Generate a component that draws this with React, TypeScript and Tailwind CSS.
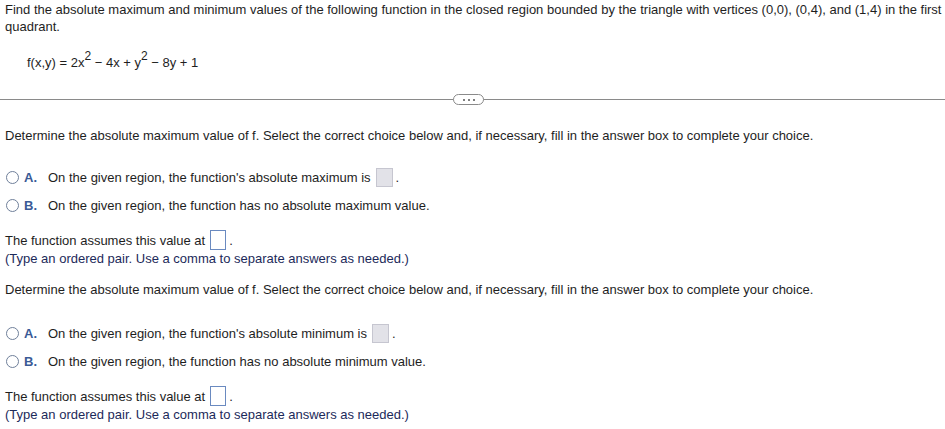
import React from "react";

function Radio({ letter, children }: { letter: string; children: React.ReactNode }) {
  return (
    <div className="flex items-center h-[20px]">
      <span className="ml-[6px] w-[13px] h-[13px] rounded-full border border-[#6f7f9a] bg-white shrink-0" />
      <span className="ml-[5px] w-[24px] font-bold text-[#3a5a96] text-[13px]">{letter}</span>
      <span className="flex items-center">{children}</span>
    </div>
  );
}

function GrayBox() {
  return <span className="inline-block w-[17px] h-[19px] bg-[#e2e2e8] border border-[#c6c6d0] ml-[5px] mr-[3px]" />;
}

function WhiteBox() {
  return <span className="inline-block w-[16px] h-[20px] bg-white border border-[#6a8ac0] ml-[5px] mr-[3px]" />;
}

export default function App() {
  return (
    <div
      className="w-[945px] h-[429px] bg-white text-[13px] leading-[17px] text-[#1e1e1e] overflow-hidden"
      style={{ fontFamily: '"Liberation Sans", Arial, sans-serif' }}
    >
      <div className="pl-[5px] pt-[1px] pr-[2px]">
        Find the absolute maximum and minimum values of the following function in the closed region bounded by the triangle with vertices (0,0), (0,4), and (1,4) in the first quadrant.
      </div>
      <div className="pl-[27px] mt-[19px] h-[17px] flex items-end">
        <span>
          f(x,y) = 2x<sup className="text-[12px] relative top-[-7px]">2</sup> − 4x + y<sup className="text-[12px] relative top-[-7px]">2</sup> − 8y + 1
        </span>
      </div>
      <div className="relative mt-[28px] h-[1px] bg-[#8a8a8a]">
        <div className="absolute left-[453px] top-[-5px] w-[31px] h-[11px] rounded-full border border-[#8a8a8a] bg-white flex items-center justify-center gap-[3px]">
          <span className="w-[2px] h-[2px] bg-[#555] rounded-full" />
          <span className="w-[2px] h-[2px] bg-[#555] rounded-full" />
          <span className="w-[2px] h-[2px] bg-[#555] rounded-full" />
        </div>
      </div>
      <div className="pl-[5px] mt-[27px]">
        Determine the absolute maximum value of f. Select the correct choice below and, if necessary, fill in the answer box to complete your choice.
      </div>
      <div className="mt-[23px] flex flex-col gap-[8px]">
        <Radio letter="A.">
          On the given region, the function's absolute maximum is<GrayBox />.
        </Radio>
        <Radio letter="B.">On the given region, the function has no absolute maximum value.</Radio>
      </div>
      <div className="pl-[5px] mt-[15px] flex items-center h-[20px]">
        The function assumes this value at<WhiteBox />.
      </div>
      <div className="pl-[5px] text-[#1c2a5a]">(Type an ordered pair. Use a comma to separate answers as needed.)</div>
      <div className="pl-[5px] mt-[14px]">
        Determine the absolute maximum value of f. Select the correct choice below and, if necessary, fill in the answer box to complete your choice.
      </div>
      <div className="mt-[25px] flex flex-col gap-[8px]">
        <Radio letter="A.">
          On the given region, the function's absolute minimum is<GrayBox />.
        </Radio>
        <Radio letter="B.">On the given region, the function has no absolute minimum value.</Radio>
      </div>
      <div className="pl-[5px] mt-[15px] flex items-center h-[20px]">
        The function assumes this value at<WhiteBox />.
      </div>
      <div className="pl-[5px] text-[#1c2a5a]">(Type an ordered pair. Use a comma to separate answers as needed.)</div>
    </div>
  );
}
